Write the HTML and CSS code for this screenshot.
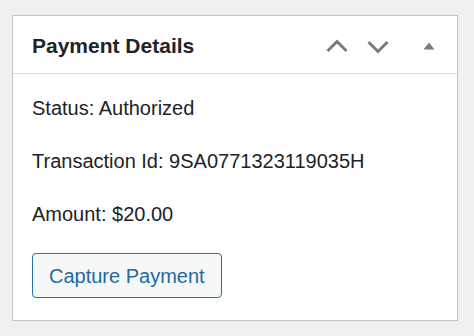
FILE: index.html
```html
<!DOCTYPE html>
<html lang="en">
<head>
    <meta charset="UTF-8">
    <title>Payment Details</title>
    <link rel="stylesheet" href="styles.css">
</head>
<body>
<div class="postbox">
    <div class="postbox-header">
        <h2 class="hndle">Payment Details</h2>
        <div class="handle-actions">
            <span class="handle-btn">
                <svg width="24" height="24" viewBox="0 0 24 24"><polyline points="2.5,17 12,7.5 21.5,17" fill="none" stroke="#787c82" stroke-width="3"/></svg>
            </span>
            <span class="handle-btn">
                <svg width="24" height="24" viewBox="0 0 24 24"><polyline points="2.5,8 12,17.5 21.5,8" fill="none" stroke="#787c82" stroke-width="3"/></svg>
            </span>
            <span class="handle-btn toggle">
                <svg width="24" height="24" viewBox="0 0 24 24"><polygon points="12,8.5 17.5,15.5 6.5,15.5" fill="#787c82"/></svg>
            </span>
        </div>
    </div>

    <div class="inside">
        <p>Status: Authorized</p>
        <p>Transaction Id: 9SA0771323119035H</p>
        <p>Amount: $20.00</p>
        <button class="button">Capture Payment</button>
    </div>
</div>
</body>
</html>
```

FILE: styles.css
```css
*{
    margin: 0;
    padding: 0;
    box-sizing: border-box;
}
body{
    background: #f0f0f1;
    padding: 15px 0 0 12px;
    font-family: "Liberation Sans", Arial, sans-serif;
    color: #1d2327;
}
.postbox{
    width: 446px;
    height: 306px;
    background: #fff;
    border: 1px solid #c3c4c7;
    box-shadow: 0 1px 1px rgba(0,0,0,0.04);
}
.postbox-header{
    height: 58px;
    padding: 2px 16px 0 19px;
    display: flex;
    align-items: center;
    border-bottom: 1px solid #dcdcde;
}
.hndle{
    font-size: 21px;
    font-weight: bold;
    flex: 1;
}
.handle-actions{
    display: flex;
    gap: 17px;
}
.handle-btn{
    width: 24px;
    height: 24px;
    display: block;
}
.handle-btn svg{
    display: block;
}
.handle-btn.toggle{
    margin-left: 10px;
}
.inside{
    padding: 18px 19px 20px;
}
.inside p{
    font-size: 20px;
    line-height: 33px;
    margin-bottom: 20px;
}
.inside p:last-of-type{
    margin-bottom: 22px;
}
.button{
    height: 45px;
    padding: 2px 16px 0;
    font-family: "Liberation Sans", Arial, sans-serif;
    font-size: 20px;
    line-height: 41px;
    color: #1d6a9f;
    background: #f6f7f7;
    border: 1px solid #2271b1;
    border-radius: 4px;
    cursor: pointer;
}
```
